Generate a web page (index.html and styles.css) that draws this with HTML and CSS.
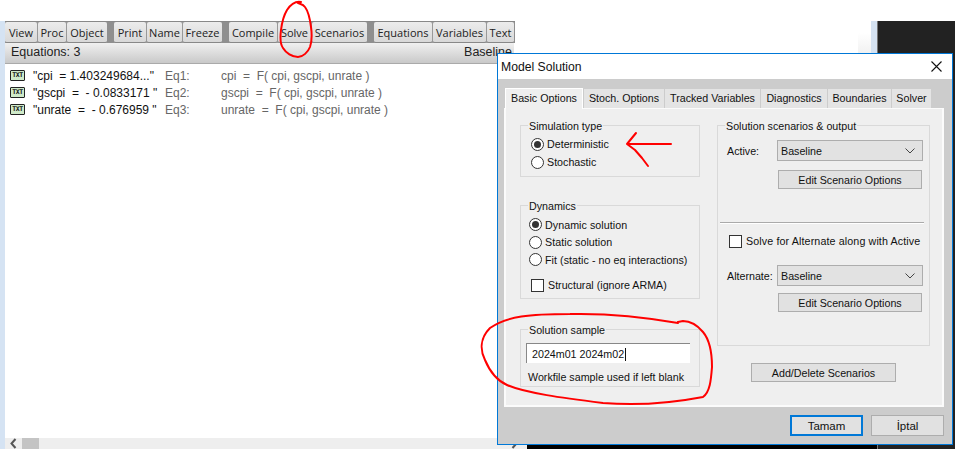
FILE: index.html
```html
<!DOCTYPE html>
<html lang="en">
<head>
<meta charset="utf-8">
<title>Model Solution</title>
<link rel="stylesheet" href="styles.css">
</head>
<body>
<div class="desktop">
  <div class="black-fill"></div>
  <div class="dark-panel"></div>
  <div class="far-shade"></div>
  <div class="far-strip"></div>

  <section class="main-window">
    <div class="strip"></div>
    <div class="main-body">
      <div class="toolbar">
        <div class="tb-group">
          <button class="tb w32">View</button><button class="tb w29">Proc</button><button class="tb w40">Object</button>
        </div>
        <div class="tb-group">
          <button class="tb w32">Print</button><button class="tb w36">Name</button><button class="tb w39">Freeze</button>
        </div>
        <div class="tb-group">
          <button class="tb w49">Compile</button><button class="tb w34">Solve</button><button class="tb w55">Scenarios</button>
        </div>
        <div class="tb-group">
          <button class="tb w59">Equations</button><button class="tb w54">Variables</button><button class="tb w27">Text</button>
        </div>
      </div>
      <div class="statusbar"><span>Equations: 3</span><span class="status-right">Baseline</span></div>
      <div class="eq-list">
        <div class="eq-row"><span class="txt-icon">TXT</span><span class="eq-name">"cpi&nbsp; = 1.403249684..."</span><span class="eq-id">Eq1:</span><span class="eq-formula">cpi&nbsp; =&nbsp; F( cpi, gscpi, unrate )</span></div>
        <div class="eq-row"><span class="txt-icon">TXT</span><span class="eq-name">"gscpi&nbsp; =&nbsp; - 0.0833171 "</span><span class="eq-id">Eq2:</span><span class="eq-formula">gscpi&nbsp; =&nbsp; F( cpi, gscpi, unrate )</span></div>
        <div class="eq-row"><span class="txt-icon">TXT</span><span class="eq-name">"unrate&nbsp; =&nbsp; - 0.676959 "</span><span class="eq-id">Eq3:</span><span class="eq-formula">unrate&nbsp; =&nbsp; F( cpi, gscpi, unrate )</span></div>
      </div>
      <div class="hscroll">
        <svg class="hs-arrow" width="7" height="11" viewBox="0 0 7 11"><path d="M5.5 1 1.5 5.5 5.5 10" fill="none" stroke="#555" stroke-width="2"/></svg>
        <div class="hs-thumb"></div>
        <svg class="hs-arrow-r" width="7" height="11" viewBox="0 0 7 11"><path d="M1.5 1 5.5 5.5 1.5 10" fill="none" stroke="#555" stroke-width="2"/></svg>
      </div>
    </div>
  </section>

  <section class="dialog">
    <header class="dlg-title">
      <span>Model Solution</span>
      <svg class="dlg-close" width="11" height="11" viewBox="0 0 11 11"><path d="M.5.5 10.5 10.5M10.5.5.5 10.5" stroke="#111" stroke-width="1.1" fill="none"/></svg>
    </header>
    <div class="tabs">
      <span class="tab active">Basic Options</span>
      <span class="tab t80">Stoch. Options</span>
      <span class="tab t95">Tracked Variables</span>
      <span class="tab t66">Diagnostics</span>
      <span class="tab t63">Boundaries</span>
      <span class="tab t39">Solver</span>
    </div>
    <div class="panel">
      <div class="col-left">
        <div class="group g-sim">
          <div class="legend">Simulation type</div>
          <label class="opt"><span class="radio on"></span>Deterministic</label>
          <label class="opt"><span class="radio"></span>Stochastic</label>
        </div>
        <div class="group g-dyn">
          <div class="legend">Dynamics</div>
          <label class="opt tight"><span class="radio on"></span>Dynamic solution</label>
          <label class="opt tight"><span class="radio"></span>Static solution</label>
          <label class="opt tight"><span class="radio"></span>Fit (static - no eq interactions)</label>
          <label class="opt struct"><span class="check"></span>Structural (ignore ARMA)</label>
        </div>
        <div class="group g-sample">
          <div class="legend">Solution sample</div>
          <div class="sample-input">2024m01 2024m02<span class="caret"></span></div>
          <div class="hint">Workfile sample used if left blank</div>
        </div>
      </div>
      <div class="col-right">
        <div class="group g-scen">
          <div class="legend">Solution scenarios &amp; output</div>
          <div class="sel-row first">
            <span class="sel-label">Active:</span>
            <div class="select"><span>Baseline</span><svg width="10" height="6" viewBox="0 0 10 6"><path d="M.5.5 5 5 9.5.5" fill="none" stroke="#444" stroke-width="1"/></svg></div>
          </div>
          <button class="btn edit">Edit Scenario Options</button>
          <div class="rule"></div>
          <label class="opt alt-check"><span class="check"></span>Solve for Alternate along with Active</label>
          <div class="sel-row second">
            <span class="sel-label">Alternate:</span>
            <div class="select"><span>Baseline</span><svg width="10" height="6" viewBox="0 0 10 6"><path d="M.5.5 5 5 9.5.5" fill="none" stroke="#444" stroke-width="1"/></svg></div>
          </div>
          <button class="btn edit edit2">Edit Scenario Options</button>
        </div>
        <button class="btn add">Add/Delete Scenarios</button>
      </div>
    </div>
    <footer class="dlg-foot">
      <button class="btn foot primary">Tamam</button>
      <button class="btn foot">İptal</button>
    </footer>
  </section>

  <svg class="ink" width="955" height="449" viewBox="0 0 955 449">
    <g fill="none" stroke="#f00" stroke-width="2" stroke-linecap="round" stroke-linejoin="round">
      <path d="M301 2C296 1 291 4 287 10 284 15 282 22 281 30 280 38 280 44 283 48 286 53 292 57 298 57 303 57 308 52 310 47 312 41 312 34 311 27 310 19 308 11 305 7 303 4 300 4 298 3"/>
      <path d="M627 144H671M636 133 627 144 635 150 642 158 648 166"/>
      <path d="M678 323C650 318 613 313 570 314 530 314 507 316 490 328 480 338 480 350 485 360 490 372 498 381 507 385 525 393 563 398 603 403 640 406 677 402 703 397 710 392 711 380 712 367 712 350 708 338 703 332 698 326 692 321 683 321L678 322"/>
    </g>
  </svg>
</div>
</body>
</html>
```
FILE: styles.css
```css
* { box-sizing: border-box; }
html, body { margin: 0; padding: 0; background: #fff; }
.desktop {
  position: relative;
  width: 955px;
  height: 449px;
  overflow: hidden;
  background: #fff;
  font-family: "Liberation Sans", Arial, sans-serif;
  color: #111;
}
.black-fill { position: absolute; left: 527px; top: 400px; right: 0; bottom: 0; background: #000; }
.dark-panel { position: absolute; left: 877px; top: 21px; right: 0; bottom: 0; background: #222; border-left: 1px solid #777; }
.far-strip { position: absolute; left: 871px; top: 21px; width: 6px; height: 40px; background: #d5e2f1; }
.far-shade { position: absolute; left: 858px; top: 21px; width: 13px; height: 40px; background: linear-gradient(#fff 30%, #ececec); }

/* main window */
.main-window { position: absolute; left: 0; top: 21px; width: 527px; height: 428px; display: flex; }
.strip { width: 5px; background: #d5e3f3; }
.main-body { flex: 1; display: flex; flex-direction: column; min-width: 0; }
.toolbar { display: flex; height: 22px; width: 510px; gap: 7px; background: #8f8f8f; border-top: 1px solid #888; }
.tb-group { display: flex; gap: 1px; background: #999; }
.tb {
  height: 21px;
  padding: 0;
  border: 0;
  border-bottom: 1px solid #888;
  border-radius: 2px;
  background: linear-gradient(#ececec, #d8d8d8);
  font: 11px "Open Sans", sans-serif;
  color: #222;
}
.w27 { width: 27px; } .w29 { width: 28px; } .w32 { width: 32px; } .w34 { width: 33px; } .w36 { width: 35px; }
.w39 { width: 39px; } .w40 { width: 40px; } .w49 { width: 48px; } .w54 { width: 53px; } .w55 { width: 55px; } .w59 { width: 58px; }
.statusbar {
  width: 509px;
  height: 21px;
  padding: 0 2px 3px 6px;
  display: flex;
  justify-content: space-between;
  align-items: center;
  font-size: 12.5px;
  color: #222;
  background: linear-gradient(#f0f0f0, #c9c9c9);
  border-bottom: 1px solid #aaa;
}
.eq-list { flex: 1; padding: 3px 0 0 5px; background: #fff; font-size: 12px; }
.eq-row { display: flex; align-items: center; height: 17px; white-space: nowrap; }
.txt-icon {
  width: 15px;
  height: 11px;
  margin-right: 8px;
  border: 1px solid #222;
  border-radius: 1px;
  background: #cfeac9;
  font: bold 6.5px/9px "DejaVu Sans Mono", monospace;
  letter-spacing: -.4px;
  text-align: center;
  color: #111;
}
.eq-name { width: 132px; color: #111; }
.eq-id { width: 56px; color: #666; }
.eq-formula { color: #666; }
.hscroll { height: 11px; background: #eee; display: flex; align-items: center; padding-left: 5px; }
.hs-thumb { width: 17px; height: 11px; margin-left: 5px; background: #c4c4c4; }
.hs-arrow-r { margin-left: 472px; }

/* dialog */
.dialog {
  position: absolute;
  left: 497px;
  top: 53px;
  width: 456px;
  height: 392px;
  display: flex;
  flex-direction: column;
  background: #ccc;
  border: 1px solid #0078d7;
  font-size: 10.7px;
  color: #111;
  font-family: "Liberation Sans", Arial, sans-serif;
}
.dlg-title {
  height: 25px;
  flex: none;
  display: flex;
  align-items: center;
  justify-content: space-between;
  padding: 0 10px 0 3px;
  background: #fff;
  font-size: 12.2px;
}
.tabs { display: flex; height: 21px; margin-top: 8px; padding-left: 7px; gap: 1px; align-items: flex-end; flex: none; }
.tab {
  display: flex;
  align-items: center;
  justify-content: center;
  height: 19px;
  padding-bottom: 1px;
  background: #e4e4e4;
  white-space: nowrap;
}
.tab.active { width: 78px; height: 21px; padding-bottom: 2px; background: #efefef; border: 1px solid #fff; border-bottom: 0; position: relative; z-index: 1; margin-bottom: -1px; }
.t80 { width: 80px; } .t95 { width: 95px; } .t66 { width: 66px; } .t63 { width: 63px; } .t39 { width: 39px; }
.panel {
  margin: 0 8px 0 6px;
  height: 299px;
  flex: none;
  display: flex;
  gap: 17px;
  padding: 16px 0 0 14px;
  background: #efefef;
  border: 2px solid #fbfbfb;
  border-top-width: 1px;
}
.col-left { width: 180px; flex: none; }
.col-right { width: 213px; flex: none; }
.group { border: 1px solid #d9d9d9; padding: 0 7px; }
.legend { width: fit-content; height: 14px; line-height: 14px; margin: -7px 0 0 0; padding: 0 1px; background: #efefef; }
.g-sim { height: 52px; }
.g-dyn { height: 94px; margin-top: 28px; }
.g-sample { height: 58px; margin-top: 30px; padding: 0 5px; }
.g-sample .legend { margin-left: 2px; }
.opt { display: flex; align-items: center; gap: 2px; height: 18px; white-space: nowrap; }
.g-sim .opt:first-of-type { margin-top: 2px; }
.g-sim .opt, .g-dyn .opt { padding-left: 3px; }
.g-dyn .tight { padding-left: 1px; height: 17.5px; letter-spacing: .05px; }
.g-dyn .opt:first-of-type { margin-top: 3px; }
.struct { margin-top: 7.5px; }
.radio { width: 13px; height: 13px; flex: none; margin-right: 1px; border-radius: 50%; border: 1px solid #333; background: #fff; display: flex; align-items: center; justify-content: center; }
.radio.on::after { content: ""; width: 7px; height: 7px; border-radius: 50%; background: #333; }
.check { width: 13px; height: 13px; flex: none; margin-right: 2px; border: 1px solid #333; background: #fff; }
.sample-input {
  height: 20px;
  margin-top: 6px;
  width: 164px;
  padding: 0 5px;
  line-height: 20px;
  background: #fff;
  border-top: 1px solid #888;
  border-left: 1px solid #888;
  white-space: nowrap;
}
.caret { display: inline-block; width: 1px; height: 13px; margin-left: 1px; background: #111; vertical-align: -3px; }
.hint { margin-top: 7px; line-height: 14px; padding-left: 2px; white-space: nowrap; }
.g-scen { height: 221px; padding: 0 2px; }
.g-scen .legend { margin-left: 5px; }
.sel-row { display: flex; align-items: center; }
.sel-row.first { margin-top: 7px; }
.sel-row.second { margin-top: 15px; }
.sel-label { width: 57px; padding-left: 7px; flex: none; white-space: nowrap; }
.select {
  width: 146px;
  height: 21px;
  display: flex;
  align-items: center;
  justify-content: space-between;
  padding: 0 7px 0 3px;
  background: #e2e2e2;
  border: 1px solid #adadad;
}
.btn {
  padding: 0;
  background: #e1e1e1;
  border: 1px solid #adadad;
  font: 10.7px "Liberation Sans", Arial, sans-serif;
  color: #111;
}
.edit { display: block; width: 144px; height: 19px; margin: 9px 0 0 58px; }
.edit2 { margin-top: 7px; }
.rule { width: 204px; margin: 33px 0 0 0; border-top: 1px solid #aaa; border-bottom: 1px solid #fff; height: 2px; }
.alt-check { margin: 8px 0 0 9px; letter-spacing: .12px; }
.add { display: block; width: 145px; height: 19px; margin: 17px 0 0 34px; }
.dlg-foot { display: flex; justify-content: flex-end; gap: 8px; margin-top: 8px; padding-right: 8px; }
.foot { width: 73px; height: 21px; font-size: 11.5px; }
.primary { border: 2px solid #0078d7; }

/* annotations */
.ink { position: absolute; left: 0; top: 0; pointer-events: none; }
```
